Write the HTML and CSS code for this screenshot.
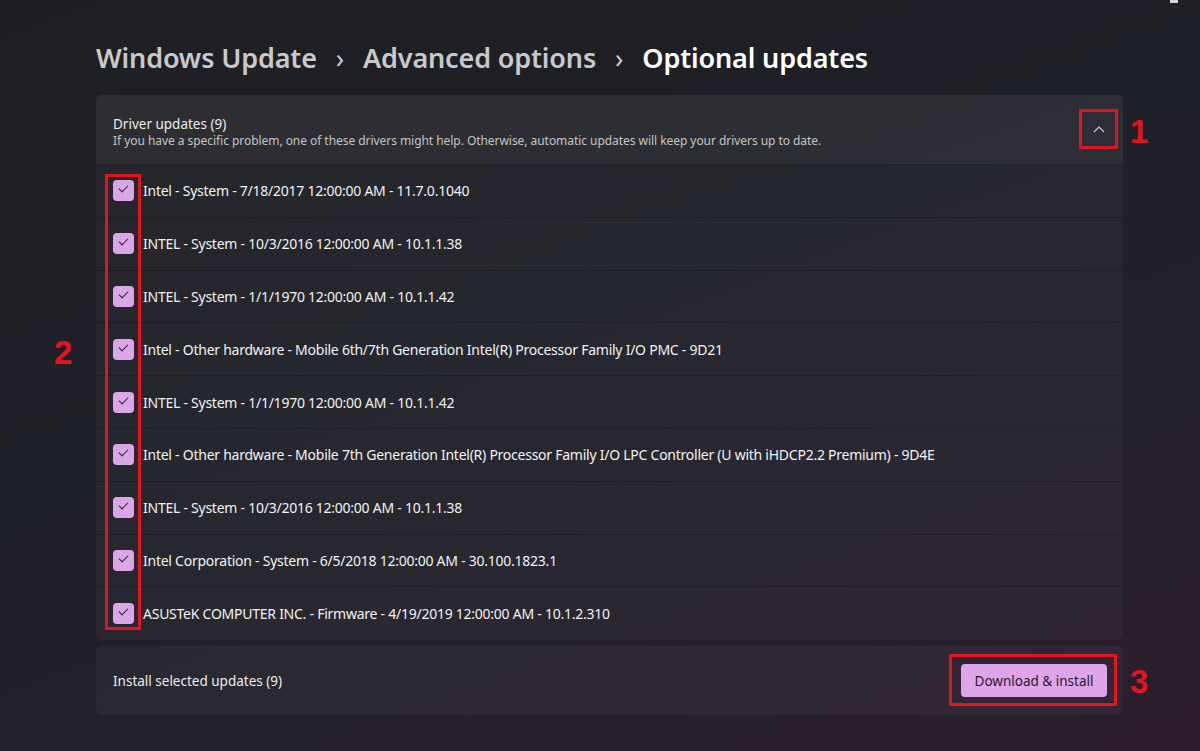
FILE: index.html
```html
<!DOCTYPE html>
<html lang="en">

<head>
    <meta charset="UTF-8">
    <title>Optional updates</title>
    <link rel="stylesheet" href="styles.css">
</head>

<body>
    <span class="corner-mark"></span>

    <div class="page">
        <h1 class="breadcrumb">
            <span class="crumb">Windows Update</span>
            <span class="sep">›</span>
            <span class="crumb">Advanced options</span>
            <span class="sep">›</span>
            <span class="crumb current">Optional updates</span>
        </h1>

        <div class="group">
            <div class="group-header">
                <div class="header-text">
                    <div class="header-title">Driver updates (9)</div>
                    <div class="header-sub">If you have a specific problem, one of these drivers might help. Otherwise, automatic updates will keep your drivers up to date.</div>
                </div>
                <div class="collapse-btn">
                    <svg width="12" height="7" viewBox="0 0 12 7"><path d="M1 6 L6 1 L11 6" fill="none" stroke="#d0d0d0" stroke-width="1.1"/></svg>
                    <span class="mark mark-box mark-1"></span>
                    <span class="mark-num num-1">1</span>
                </div>
            </div>

            <div class="driver-list">
                <span class="mark mark-box mark-2"></span>
                <span class="mark-num num-2">2</span>
                <div class="driver-row"><span class="check"></span>Intel - System - 7/18/2017 12:00:00 AM - 11.7.0.1040</div>
                <div class="driver-row"><span class="check"></span>INTEL - System - 10/3/2016 12:00:00 AM - 10.1.1.38</div>
                <div class="driver-row"><span class="check"></span>INTEL - System - 1/1/1970 12:00:00 AM - 10.1.1.42</div>
                <div class="driver-row"><span class="check"></span>Intel - Other hardware - Mobile 6th/7th Generation Intel(R) Processor Family I/O PMC - 9D21</div>
                <div class="driver-row"><span class="check"></span>INTEL - System - 1/1/1970 12:00:00 AM - 10.1.1.42</div>
                <div class="driver-row"><span class="check"></span>Intel - Other hardware - Mobile 7th Generation Intel(R) Processor Family I/O LPC Controller (U with iHDCP2.2 Premium) - 9D4E</div>
                <div class="driver-row"><span class="check"></span>INTEL - System - 10/3/2016 12:00:00 AM - 10.1.1.38</div>
                <div class="driver-row"><span class="check"></span>Intel Corporation - System - 6/5/2018 12:00:00 AM - 30.100.1823.1</div>
                <div class="driver-row"><span class="check"></span>ASUSTeK COMPUTER INC. - Firmware - 4/19/2019 12:00:00 AM - 10.1.2.310</div>
            </div>
        </div>

        <div class="install-bar">
            <span>Install selected updates (9)</span>
            <button class="btn-install">Download &amp; install
                <span class="mark mark-box mark-3"></span>
                <span class="mark-num num-3">3</span>
            </button>
        </div>
    </div>
</body>

</html>
```

FILE: styles.css
```css
* {
    margin: 0;
    padding: 0;
    box-sizing: border-box;
}

body {
    font-family: 'Noto Sans', 'Open Sans', sans-serif;
    background: linear-gradient(160deg, #1f1f23 0%, #1e2027 40%, #24202b 72%, #2c1d2b 100%);
    width: 1200px;
    height: 751px;
    overflow: hidden;
    color: #ffffff;
    position: relative;
}

.corner-mark {
    position: absolute;
    top: 0;
    left: 1170px;
    width: 8px;
    height: 3px;
    background: #d8d8d8;
}

.page {
    padding: 39px 77px 0 96px;
}

.breadcrumb {
    display: flex;
    align-items: baseline;
    font-size: 27px;
    font-weight: 600;
    letter-spacing: -0.15px;
    color: #c9c9cc;
    height: 56px;
}

.sep {
    font-size: 27px;
    font-weight: 400;
    margin: 0 19px 0 19px;
}

.crumb.current {
    color: #ffffff;
}

.group {
    border-radius: 5px;
}

.group-header {
    display: flex;
    align-items: center;
    justify-content: space-between;
    height: 70px;
    padding: 0 0 0 17px;
    background: rgba(255, 255, 255, 0.065);
    border-radius: 5px 5px 0 0;
    border-bottom: 1px solid rgba(0, 0, 0, 0.25);
}

.header-text {
    padding-top: 4px;
}

.header-title {
    font-size: 13.5px;
    color: #ececec;
    line-height: 18px;
}

.header-sub {
    font-size: 12px;
    color: #c4c4c4;
    line-height: 16px;
    letter-spacing: -0.05px;
}

.collapse-btn {
    position: relative;
    width: 40px;
    height: 40px;
    margin-right: 4px;
    display: flex;
    align-items: center;
    justify-content: center;
}

.driver-list {
    position: relative;
    background: rgba(255, 255, 255, 0.035);
    border-radius: 0 0 5px 5px;
}

.driver-row {
    display: flex;
    align-items: center;
    height: 52.8px;
    padding-left: 17px;
    font-size: 14px;
    color: #f2f2f2;
    letter-spacing: -0.25px;
    border-bottom: 1px solid rgba(0, 0, 0, 0.22);
}

.driver-row:last-child {
    border-bottom: none;
}

.check {
    position: relative;
    width: 21px;
    height: 21px;
    border-radius: 4px;
    background: #dba6e8;
    margin-right: 9px;
    flex-shrink: 0;
}

.check::after {
    content: '';
    position: absolute;
    left: 6px;
    top: 5px;
    width: 8px;
    height: 4px;
    border-left: 1.3px solid #2a1c30;
    border-bottom: 1.3px solid #2a1c30;
    transform: rotate(-45deg);
}

.install-bar {
    display: flex;
    align-items: center;
    justify-content: space-between;
    margin-top: 6px;
    height: 69px;
    padding: 0 16px 0 17px;
    background: rgba(255, 255, 255, 0.04);
    border-radius: 5px;
    font-size: 13.5px;
    color: #ececec;
}

.btn-install {
    position: relative;
    font-family: inherit;
    font-size: 13.5px;
    color: #2a1830;
    background: #dea5e8;
    border: none;
    border-radius: 4px;
    width: 146px;
    height: 33px;
}

/* annotation overlays */
.mark-box {
    position: absolute;
    border: 3px solid #e3141f;
}

.mark-num {
    position: absolute;
    font-family: 'Liberation Sans', sans-serif;
    font-weight: 700;
    font-size: 33px;
    color: #e3141f;
    line-height: 1;
}

.mark-1 {
    left: 0;
    top: -1px;
    width: 39px;
    height: 40px;
}

.num-1 {
    left: 51px;
    top: 5px;
}

.mark-2 {
    left: 9px;
    top: 9px;
    width: 36px;
    height: 456px;
}

.num-2 {
    left: -42px;
    top: 171px;
}

.mark-3 {
    left: -12px;
    top: -10px;
    width: 168px;
    height: 52px;
}

.num-3 {
    left: 169px;
    top: 1px;
}
```
